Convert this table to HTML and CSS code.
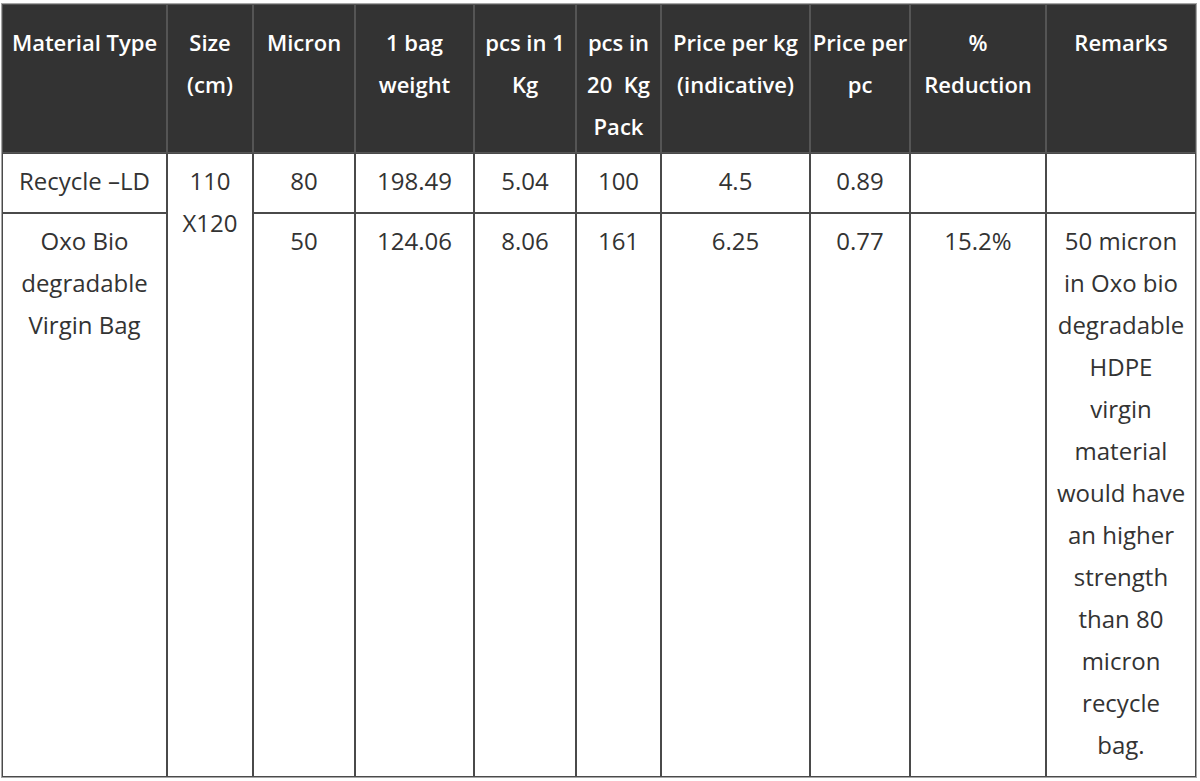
FILE: index.html
```html
<!DOCTYPE html>
<html lang="en">
<head>
<meta charset="utf-8">
<title>Bag comparison</title>
<link rel="stylesheet" href="styles.css">
</head>
<body>
<div class="wrap">
<table class="grid">
  <colgroup>
    <col class="c1"><col class="c2"><col class="c3"><col class="c4"><col class="c5">
    <col class="c6"><col class="c7"><col class="c8"><col class="c9"><col class="c10">
  </colgroup>
  <thead>
    <tr>
      <th>Material Type</th>
      <th>Size<br>(cm)</th>
      <th>Micron</th>
      <th>1 bag<br>weight</th>
      <th>pcs in 1<br>Kg</th>
      <th>pcs in<br>20&nbsp; Kg<br>Pack</th>
      <th>Price per kg<br>(indicative)</th>
      <th>Price per<br>pc</th>
      <th>%<br>Reduction</th>
      <th>Remarks</th>
    </tr>
  </thead>
  <tbody>
    <tr class="r1">
      <td>Recycle –LD</td>
      <td rowspan="2">110<br>X120</td>
      <td>80</td>
      <td>198.49</td>
      <td>5.04</td>
      <td>100</td>
      <td>4.5</td>
      <td>0.89</td>
      <td></td>
      <td></td>
    </tr>
    <tr>
      <td>Oxo Bio<br>degradable<br>Virgin Bag</td>
      <td>50</td>
      <td>124.06</td>
      <td>8.06</td>
      <td>161</td>
      <td>6.25</td>
      <td>0.77</td>
      <td>15.2%</td>
      <td>50 micron<br>in Oxo bio<br>degradable<br>HDPE<br>virgin<br>material<br>would have<br>an higher<br>strength<br>than 80<br>micron<br>recycle<br>bag.</td>
    </tr>
  </tbody>
</table>
</div>
</body>
</html>
```

FILE: styles.css
```css
html, body {
  margin: 0;
  padding: 0;
  background: #ffffff;
}

.wrap {
  padding: 3px 0 0 1px;
}

.grid {
  width: 1196px;
  table-layout: fixed;
  border-collapse: separate;
  border-spacing: 0;
  border: 1px solid #a6a6a6;
  font-family: "Open Sans", "Liberation Sans", sans-serif;
  font-size: 24px;
  line-height: 42px;
  color: #333333;
}

.c1 { width: 165px; }
.c2 { width: 86px; }
.c3 { width: 102px; }
.c4 { width: 119px; }
.c5 { width: 102px; }
.c6 { width: 85px; }
.c7 { width: 149px; }
.c8 { width: 100px; }
.c9 { width: 136px; }
.c10 { width: 150px; }

.grid th,
.grid td {
  border: 1px solid #4a4a4a;
  text-align: center;
  vertical-align: top;
  padding: 6px 0 10px;
  white-space: nowrap;
  overflow: visible;
}

.grid th {
  background: #333333;
  color: #ffffff;
  font-size: 22px;
  font-weight: 600;
  padding: 16px 0 5px;
  border-color: #555555;
}
```
